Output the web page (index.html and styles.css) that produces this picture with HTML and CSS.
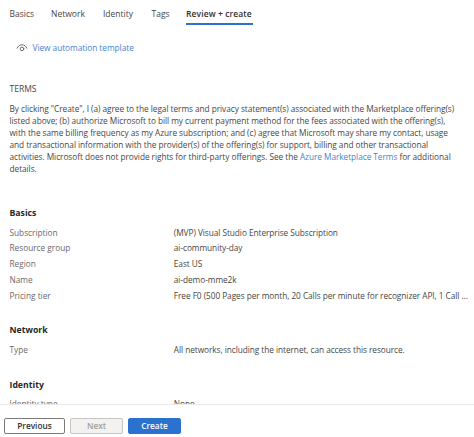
FILE: index.html
```html
<!DOCTYPE html>
<html lang="en">
<head>
<meta charset="utf-8">
<title>Review + create</title>
<link rel="stylesheet" href="styles.css">
</head>
<body>
<main class="content">
  <nav class="tabs">
    <a class="tab tab-basics">Basics</a>
    <a class="tab tab-network">Network</a>
    <a class="tab tab-identity">Identity</a>
    <a class="tab tab-tags">Tags</a>
    <a class="tab active">Review + create</a>
  </nav>
  <div class="template">
    <svg class="eye" viewBox="0 0 12 10" fill="none" stroke="#605e5c" stroke-width="0.9" stroke-linecap="round"><path d="M1.2 5.2C2 3 3.8 1.8 6 1.8S10 3 10.8 5.2"/><circle cx="6" cy="5.9" r="1.8"/></svg>
    <a class="link">View automation template</a>
  </div>
  <h2 class="terms-title">TERMS</h2>
  <p class="terms">By clicking "Create", I (a) agree to the legal terms and privacy statement(s) associated with the Marketplace offering(s)<br>listed above; (b) authorize Microsoft to bill my current payment method for the fees associated with the offering(s),<br>with the same billing frequency as my Azure subscription; and (c) agree that Microsoft may share my contact, usage<br>and transactional information with the provider(s) of the offering(s) for support, billing and other transactional<br>activities. Microsoft does not provide rights for third-party offerings. See the <a class="link">Azure Marketplace Terms</a> for additional<br>details.</p>
  <section class="group">
    <h3>Basics</h3>
    <dl>
      <dt>Subscription</dt><dd>(MVP) Visual Studio Enterprise Subscription</dd>
      <dt>Resource group</dt><dd>ai-community-day</dd>
      <dt>Region</dt><dd>East US</dd>
      <dt>Name</dt><dd>ai-demo-mme2k</dd>
      <dt>Pricing tier</dt><dd>Free F0 (500 Pages per month, 20 Calls per minute for recognizer API, 1 Call ...</dd>
    </dl>
  </section>
  <section class="group">
    <h3>Network</h3>
    <dl><dt>Type</dt><dd>All networks, including the internet, can access this resource.</dd></dl>
  </section>
  <section class="group">
    <h3>Identity</h3>
    <dl><dt>Identity type</dt><dd>None</dd></dl>
  </section>
</main>
<footer class="footer">
  <button class="btn previous">Previous</button>
  <button class="btn next" disabled>Next</button>
  <button class="btn create">Create</button>
</footer>
</body>
</html>
```
FILE: styles.css
```css
* { box-sizing: border-box; }
body {
  margin: 0;
  height: 437px;
  display: flex;
  flex-direction: column;
  overflow: hidden;
  background: #fff;
  color: #484644;
  font: 8.3px/12px "Open Sans", "Noto Sans", sans-serif;
}
.content { height: 404px; overflow: hidden; padding-left: 9.5px; }
.tabs { display: flex; height: 25px; padding-top: 8px; font-size: 8.5px; }
.tab { height: 17px; white-space: nowrap; }
.tab-basics { width: 41.5px; }
.tab-network { width: 52px; }
.tab-identity { width: 48.5px; }
.tab-tags { width: 34.5px; }
.tab.active { width: 66.5px; border-bottom: 2px solid #2b71d0; color: #323130; font-weight: 600; letter-spacing: 0.1px; }
.template { display: flex; align-items: center; gap: 5px; height: 12px; margin: 17px 0 0 6px; letter-spacing: -0.04px; }
.eye { width: 12px; height: 10px; }
.link { color: #4783d3; }
.terms-title { margin: 29px 0 0; font-size: 8.5px; font-weight: 400; line-height: 12px; }
.terms { margin: 7.5px 0 0; white-space: nowrap; letter-spacing: -0.055px; }
.group { padding-top: 32.3px; }
.group + .group { padding-top: 20.7px; }
.group h3 { margin: 0; font-size: 8.7px; font-weight: 700; line-height: 12px; color: #292827; }
.group dl { display: grid; grid-template-columns: 164.3px 1fr; margin: 5.8px 0 0; line-height: 15.8px; white-space: nowrap; letter-spacing: -0.06px; }
.group dt { color: #6b6967; letter-spacing: -0.02px; }
.group dd { margin: 0; }
.footer { display: flex; gap: 5px; height: 33px; padding: 13px 0 0 4px; border-top: 1px solid #eaeaea; }
.btn { width: 53px; height: 16px; padding: 0; border: 1px solid; border-radius: 2px; font: 600 8.3px/14px "Open Sans", sans-serif; }
.previous { width: 61px; background: #fff; border-color: #7d7b79; color: #323130; }
.next { background: #f3f2f1; border-color: #c8c6c4; color: #a19f9d; }
.create { background: #2b71d0; border-color: #2b71d0; color: #fff; }
```
